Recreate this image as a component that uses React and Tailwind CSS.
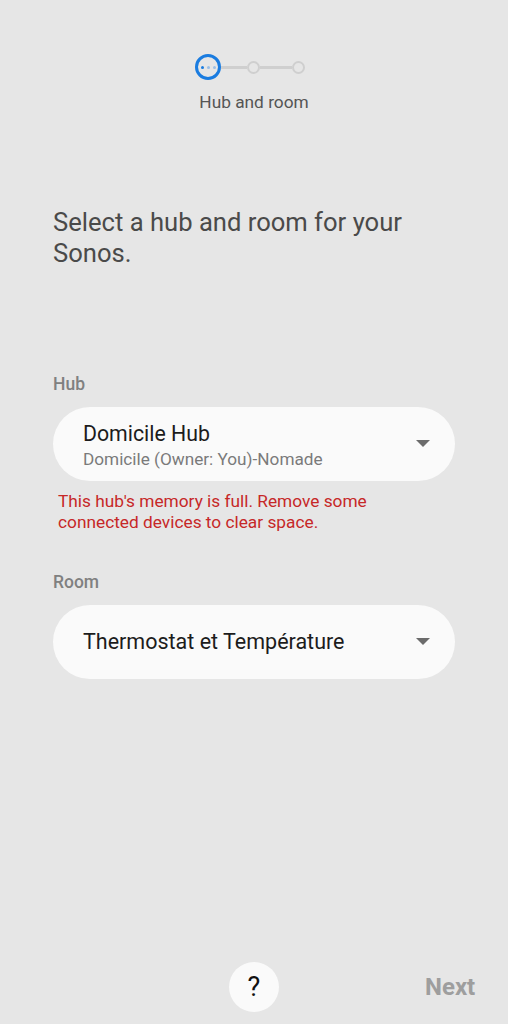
import React from 'react'

function Caret() {
  return (
    <svg width="14" height="8" viewBox="0 0 14 8" className="shrink-0">
      <path d="M0 0 L14 0 L7 7 Z" fill="#6b6b6b" />
    </svg>
  )
}

function Stepper() {
  return (
    <div className="flex flex-col items-center">
      <div className="flex items-center mr-[8px]">
        <div className="w-[26px] h-[26px] rounded-full border-[3px] border-[#1a7ce0] flex items-center justify-center gap-[3px]">
          <span className="w-[3px] h-[3px] rounded-full bg-[#1a7ce0]" />
          <span className="w-[3px] h-[3px] rounded-full bg-[#9bbfe6]" />
          <span className="w-[3px] h-[3px] rounded-full bg-[#9bbfe6]" />
        </div>
        <div className="w-[26px] h-[3px] bg-[#cfcfcf]" />
        <div className="w-[13px] h-[13px] rounded-full border-2 border-[#cfcfcf]" />
        <div className="w-[32px] h-[3px] bg-[#cfcfcf]" />
        <div className="w-[13px] h-[13px] rounded-full border-2 border-[#cfcfcf]" />
      </div>
      <p className="mt-[12px] text-[17.3px] leading-[20px] text-[#555555]">Hub and room</p>
    </div>
  )
}

export default function App() {
  return (
    <div className="w-[508px] h-[1024px] bg-[#e6e6e6] flex flex-col font-['Roboto',sans-serif]">
      <div className="pt-[54px]">
        <Stepper />
      </div>

      <div className="px-[53px] pt-[95px]">
        <h1 className="text-[25.6px] leading-[31px] text-[#4a4a4a]">
          Select a hub and room for your Sonos.
        </h1>

        <p className="mt-[104px] text-[17.5px] leading-[22px] text-[#808080] font-medium">Hub</p>
        <div className="mt-[12px] w-[402px] h-[74px] rounded-full bg-[#fafafa] flex items-center justify-between pl-[30px] pr-[25px]">
          <div className="flex flex-col pt-[2px]">
            <span className="text-[21.3px] leading-[26px] text-[#1c1c1c]">Domicile Hub</span>
            <span className="text-[17.2px] leading-[22px] text-[#7a7a7a] mt-[1px]">Domicile (Owner: You)-Nomade</span>
          </div>
          <Caret />
        </div>
        <p className="mt-[10px] pl-[5px] text-[17.3px] leading-[21px] text-[#c62828]">
          This hub's memory is full. Remove some<br />connected devices to clear space.
        </p>

        <p className="mt-[38px] text-[17.5px] leading-[22px] text-[#808080] font-medium">Room</p>
        <div className="mt-[12px] w-[402px] h-[74px] rounded-full bg-[#fafafa] flex items-center justify-between pl-[30px] pr-[25px]">
          <span className="text-[21.5px] leading-[26px] text-[#1c1c1c]">Thermostat et Température</span>
          <Caret />
        </div>
      </div>

      <div className="mt-auto flex items-center relative h-[62px]">
        <div className="absolute left-[229px] top-[0px] w-[50px] h-[50px] rounded-full bg-[#fafafa] flex items-center justify-center">
          <span className="text-[27px] leading-none text-[#111]">?</span>
        </div>
        <span className="absolute left-[425px] top-[11px] text-[24px] leading-[28px] font-bold text-[#9e9e9e]">Next</span>
      </div>
    </div>
  )
}
